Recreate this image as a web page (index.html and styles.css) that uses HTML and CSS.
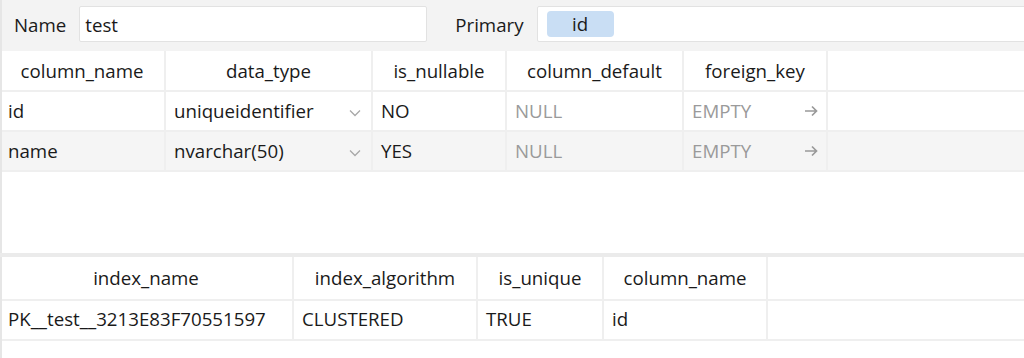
FILE: index.html
```html
<!DOCTYPE html>
<html lang="en">
<head>
    <meta charset="UTF-8">
    <title>table editor</title>
    <link rel="stylesheet" href="styles.css">
</head>
<body>
    <section class="editor">
        <div class="toolbar">
            <label class="lbl">Name</label>
            <div class="field name-field">test</div>
            <label class="lbl primary-lbl">Primary</label>
            <div class="field primary-field"><span class="chip">id</span></div>
        </div>

        <div class="pane columns-pane">
            <table class="grid">
                <colgroup>
                    <col style="width:163px">
                    <col style="width:207px">
                    <col style="width:134px">
                    <col style="width:177px">
                    <col style="width:144px">
                    <col>
                </colgroup>
                <thead>
                    <tr>
                        <th>column_name</th>
                        <th>data_type</th>
                        <th>is_nullable</th>
                        <th>column_default</th>
                        <th>foreign_key</th>
                        <th></th>
                    </tr>
                </thead>
                <tbody>
                    <tr>
                        <td>id</td>
                        <td><div class="cell-sel">uniqueidentifier<svg class="chev" width="12" height="8" viewBox="0 0 12 8"><polyline points="1,1.5 6,6.5 11,1.5" fill="none" stroke="#a8a8a8" stroke-width="1.3"/></svg></div></td>
                        <td>NO</td>
                        <td class="muted">NULL</td>
                        <td class="muted"><div class="cell-sel">EMPTY<svg class="arrow" width="14" height="12" viewBox="0 0 14 12"><path d="M1 6H12.5M8 1.5L12.5 6L8 10.5" fill="none" stroke="#999" stroke-width="1.7"/></svg></div></td>
                        <td></td>
                    </tr>
                    <tr class="alt">
                        <td>name</td>
                        <td><div class="cell-sel">nvarchar(50)<svg class="chev" width="12" height="8" viewBox="0 0 12 8"><polyline points="1,1.5 6,6.5 11,1.5" fill="none" stroke="#a8a8a8" stroke-width="1.3"/></svg></div></td>
                        <td>YES</td>
                        <td class="muted">NULL</td>
                        <td class="muted"><div class="cell-sel">EMPTY<svg class="arrow" width="14" height="12" viewBox="0 0 14 12"><path d="M1 6H12.5M8 1.5L12.5 6L8 10.5" fill="none" stroke="#999" stroke-width="1.7"/></svg></div></td>
                        <td></td>
                    </tr>
                </tbody>
            </table>
        </div>

        <div class="splitter"></div>

        <div class="pane index-pane">
            <table class="grid">
                <colgroup>
                    <col style="width:291px">
                    <col style="width:184px">
                    <col style="width:126px">
                    <col style="width:164px">
                    <col>
                </colgroup>
                <thead>
                    <tr>
                        <th>index_name</th>
                        <th>index_algorithm</th>
                        <th>is_unique</th>
                        <th>column_name</th>
                        <th></th>
                    </tr>
                </thead>
                <tbody>
                    <tr>
                        <td>PK__test__3213E83F70551597</td>
                        <td>CLUSTERED</td>
                        <td>TRUE</td>
                        <td>id</td>
                        <td></td>
                    </tr>
                </tbody>
            </table>
        </div>
    </section>
</body>
</html>
```

FILE: styles.css
```css
*{
    margin: 0;
    padding: 0;
    box-sizing: border-box;
}
html{
    font-size: 18.7px;
    font-family: 'Open Sans', 'Noto Sans', sans-serif;
    color: #1a1a1a;
}
body{
    background: #fff;
    overflow: hidden;
}
.editor{
    width: 1024px;
    height: 358px;
    display: flex;
    flex-direction: column;
    overflow: hidden;
}

/*---顶部---*/
.toolbar{
    height: 51px;
    flex: none;
    display: flex;
    align-items: center;
    padding: 0 0 3px 12px;
    background: #f3f3f3;
    border-left: 2px solid #e6e6e6;
}
.toolbar .lbl{
    margin-right: 13px;
}
.toolbar .primary-lbl{
    margin-left: 28px;
    margin-right: 13px;
}
.toolbar .field{
    height: 36px;
    background: #fff;
    border: 1px solid #e2e2e2;
    border-radius: 2px;
    display: flex;
    align-items: center;
    padding-left: 5px;
}
.toolbar .name-field{
    width: 348px;
}
.toolbar .primary-field{
    flex: 1;
    margin-right: -4px;
    padding-left: 9px;
}
.chip{
    display: inline-block;
    width: 67px;
    height: 26px;
    line-height: 26px;
    text-align: center;
    background: #c9def4;
    border-radius: 4px;
}

/*---表格---*/
.pane{
    border-left: 2px solid #e6e6e6;
    overflow: hidden;
}
.columns-pane{
    height: 202px;
    flex: none;
}
.index-pane{
    flex: 1;
}
.splitter{
    height: 4px;
    flex: none;
    background: #ebebeb;
}
.grid{
    width: 100%;
    table-layout: fixed;
    border-collapse: collapse;
}
.grid th,
.grid td{
    height: 40px;
    border: 2px solid #efefef;
    padding: 0 8px 1px;
    white-space: nowrap;
    overflow: hidden;
    text-align: left;
    font-weight: normal;
}
.index-pane .grid td{
    padding-bottom: 4px;
}
.grid tr > :first-child{
    border-left: none;
    padding-left: 6px;
}
.grid tr > :last-child{
    border-right: none;
}
.grid thead tr:first-child th{
    border-top: none;
    text-align: center;
}
.index-pane .grid th{
    height: 43px;
}
.grid tr.alt td{
    background: #f5f5f5;
}
.grid td.muted{
    color: #9a9a9a;
}
.cell-sel{
    display: flex;
    align-items: center;
    justify-content: space-between;
}
.cell-sel .chev{
    margin-right: 2px;
    margin-top: 4px;
}
```
